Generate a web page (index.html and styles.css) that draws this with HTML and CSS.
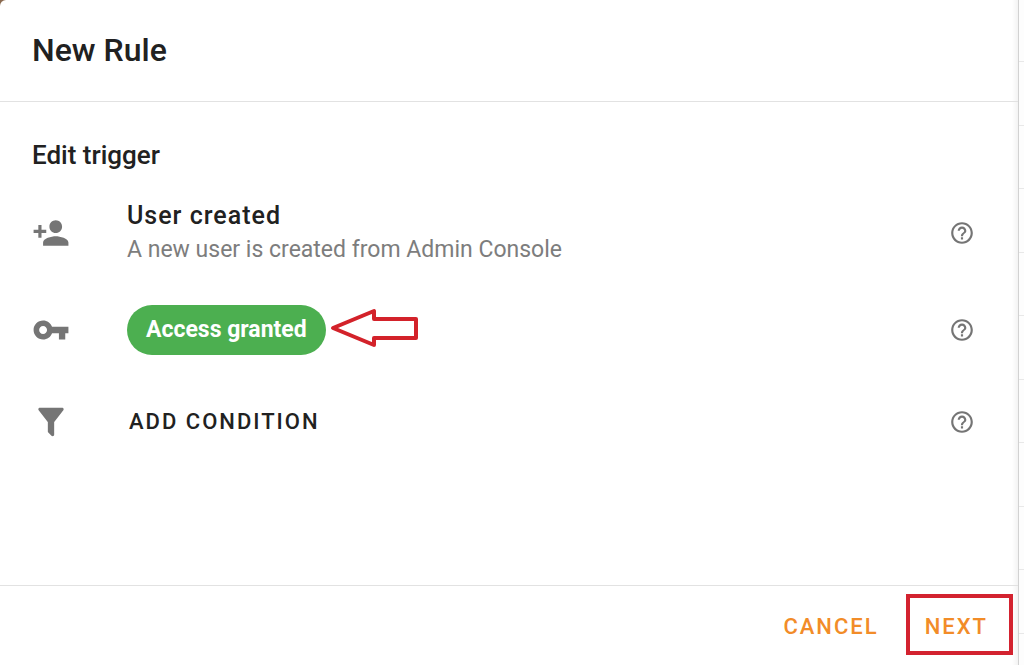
FILE: index.html
```html
<!DOCTYPE html>
<html lang="en">
<head>
    <meta charset="UTF-8">
    <title>New Rule</title>
    <link rel="stylesheet" href="styles.css">
</head>
<body>
<svg class="sprite" aria-hidden="true">
    <symbol id="help" viewBox="0 0 24 24">
        <path d="M11 18h2v-2h-2v2zm1-16C6.48 2 2 6.48 2 12s4.480 10 10 10 10-4.480 10-10S17.520 2 12 2zm0 18c-4.410 0-8-3.590-8-8s3.590-8 8-8 8 3.590 8 8-3.590 8-8 8zm0-14c-2.210 0-4 1.790-4 4h2c0-1.100.9-2 2-2s2 .9 2 2c0 2-3 1.750-3 5h2c0-2.250 3-2.500 3-5 0-2.210-1.790-4-4-4z"/>
    </symbol>
</svg>
<main class="dialog">
    <header class="header">
        <h1>New Rule</h1>
    </header>
    <section class="content">
        <h2>Edit trigger</h2>
        <ul class="rules">
            <li class="rule">
                <svg class="icon" viewBox="0 0 24 24" aria-hidden="true"><path d="M15 12c2.210 0 4-1.790 4-4s-1.790-4-4-4-4 1.790-4 4 1.790 4 4 4zm-9-2V7H4v3H1v2h3v3h2v-3h3v-2H6zm9 4c-2.670 0-8 1.340-8 4v2h16v-2c0-2.660-5.330-4-8-4z"/></svg>
                <div class="text">
                    <h3>User created</h3>
                    <p>A new user is created from Admin Console</p>
                </div>
                <button class="help" type="button" aria-label="Help"><svg><use href="#help"/></svg></button>
            </li>
            <li class="rule">
                <svg class="icon" viewBox="0 0 24 24" aria-hidden="true"><path d="M12.650 10C11.830 7.670 9.610 6 7 6c-3.310 0-6 2.690-6 6s2.690 6 6 6c2.610 0 4.830-1.670 5.650-4H17v4h4v-4h2v-4H12.650zM7 14.500c-1.400 0-2.500-1.100-2.500-2.500s1.100-2.500 2.500-2.500 2.500 1.100 2.500 2.500-1.100 2.500-2.500 2.500z"/></svg>
                <div class="text">
                    <button class="chip" type="button">Access granted</button>
                    <svg class="arrow" viewBox="0 0 88 40" aria-hidden="true"><path d="M3 20L44 3V11H86V30H44V37Z"/></svg>
                </div>
                <button class="help" type="button" aria-label="Help"><svg><use href="#help"/></svg></button>
            </li>
            <li class="rule">
                <svg class="icon" viewBox="0 0 24 24" aria-hidden="true"><path d="M14 12v7.880c.04.3-.06.620-.290.830-.390.390-1.020.390-1.410 0l-2.010-2.010c-.230-.230-.330-.540-.290-.830V12h-.030L4.210 4.620C3.870 4.190 3.950 3.560 4.380 3.220 4.570 3.080 4.780 3 5 3h14c.220 0 .430.080.620.220.430.340.510.970.170 1.400L14.030 12H14z"/></svg>
                <div class="text">
                    <button class="add" type="button">ADD CONDITION</button>
                </div>
                <button class="help" type="button" aria-label="Help"><svg><use href="#help"/></svg></button>
            </li>
        </ul>
    </section>
    <footer class="footer">
        <button class="action" type="button">CANCEL</button>
        <button class="action marked" type="button">NEXT</button>
    </footer>
</main>
</body>
</html>
```
FILE: styles.css
```css
* {
    box-sizing: border-box;
}
body {
    margin: 0;
    padding-right: 5px;
    font-family: Roboto, "Liberation Sans", sans-serif;
    color: #212121;
    /* dark page corner, then rows of the table behind the dialog */
    background:
        linear-gradient(#8a6a50, #8a6a50) 0 0 / 6px 6px no-repeat,
        linear-gradient(#e8e8e8 1px, transparent 1px, transparent 64px, #e8e8e8 64px, #e8e8e8 65px, transparent 65px) 0 61px / 100% 127px #fdfdfd;
}
h1, h2, h3, p, ul {
    margin: 0;
    padding: 0;
}
h1, h2, h3 {
    font-weight: 500;
}
button {
    padding: 0;
    border: none;
    background: none;
    font-family: inherit;
    font-size: 22px;
    font-weight: 500;
    color: inherit;
    cursor: pointer;
}
.sprite {
    display: none;
}
.dialog {
    display: flex;
    flex-direction: column;
    min-height: 100vh;
    background: linear-gradient(to left, #f3f3f3, #fff 6px);
    border-right: 1px solid #d2d2d2;
    border-top-left-radius: 6px;
}
.header {
    padding: 30px 32px 31px;
    border-bottom: 1px solid #e2e2e2;
}
h1 {
    font-size: 32px;
    line-height: 40px;
}
.content {
    flex: 1;
    padding: 37px 43px 37px 32px;
}
h2 {
    margin-bottom: 28px;
    font-size: 26px;
    line-height: 32px;
}
.rules {
    display: grid;
    gap: 34px;
    list-style: none;
}
.rule {
    display: flex;
    align-items: center;
    min-height: 58px;
}
.icon {
    flex: none;
    width: 38px;
    height: 38px;
    margin-right: 57px;
    fill: #757575;
}
.text {
    position: relative;
    flex: 1;
}
h3 {
    font-size: 25px;
    line-height: 34px;
    letter-spacing: 1px;
}
p {
    font-size: 23px;
    line-height: 34px;
    color: #7d7d7d;
}
.help {
    width: 26px;
    height: 26px;
}
.help svg {
    display: block;
    width: 100%;
    height: 100%;
    fill: #757575;
}
.chip {
    display: block;
    padding: 0 19px;
    border-radius: 26px;
    font-size: 23px;
    font-weight: 700;
    line-height: 50px;
    color: #fff;
    background-color: #4caf50;
}
/* callout laid over the row */
.arrow {
    position: absolute;
    top: 3px;
    left: 203px;
    width: 88px;
    height: 40px;
    fill: #fff;
    stroke: #d3222a;
    stroke-width: 4px;
    stroke-linejoin: round;
}
.add {
    padding: 0 2px;
    line-height: 32px;
    letter-spacing: 2px;
}
.footer {
    display: flex;
    justify-content: flex-end;
    gap: 8px;
    padding: 8px 5px 10px;
    border-top: 1px solid #e2e2e2;
}
.action {
    padding: 4px 15px 0;
    border: 4px solid transparent;
    line-height: 49px;
    letter-spacing: 2px;
    color: #f28c28;
}
.marked {
    padding-right: 21px;
    border-color: #d3222f;
}
```
